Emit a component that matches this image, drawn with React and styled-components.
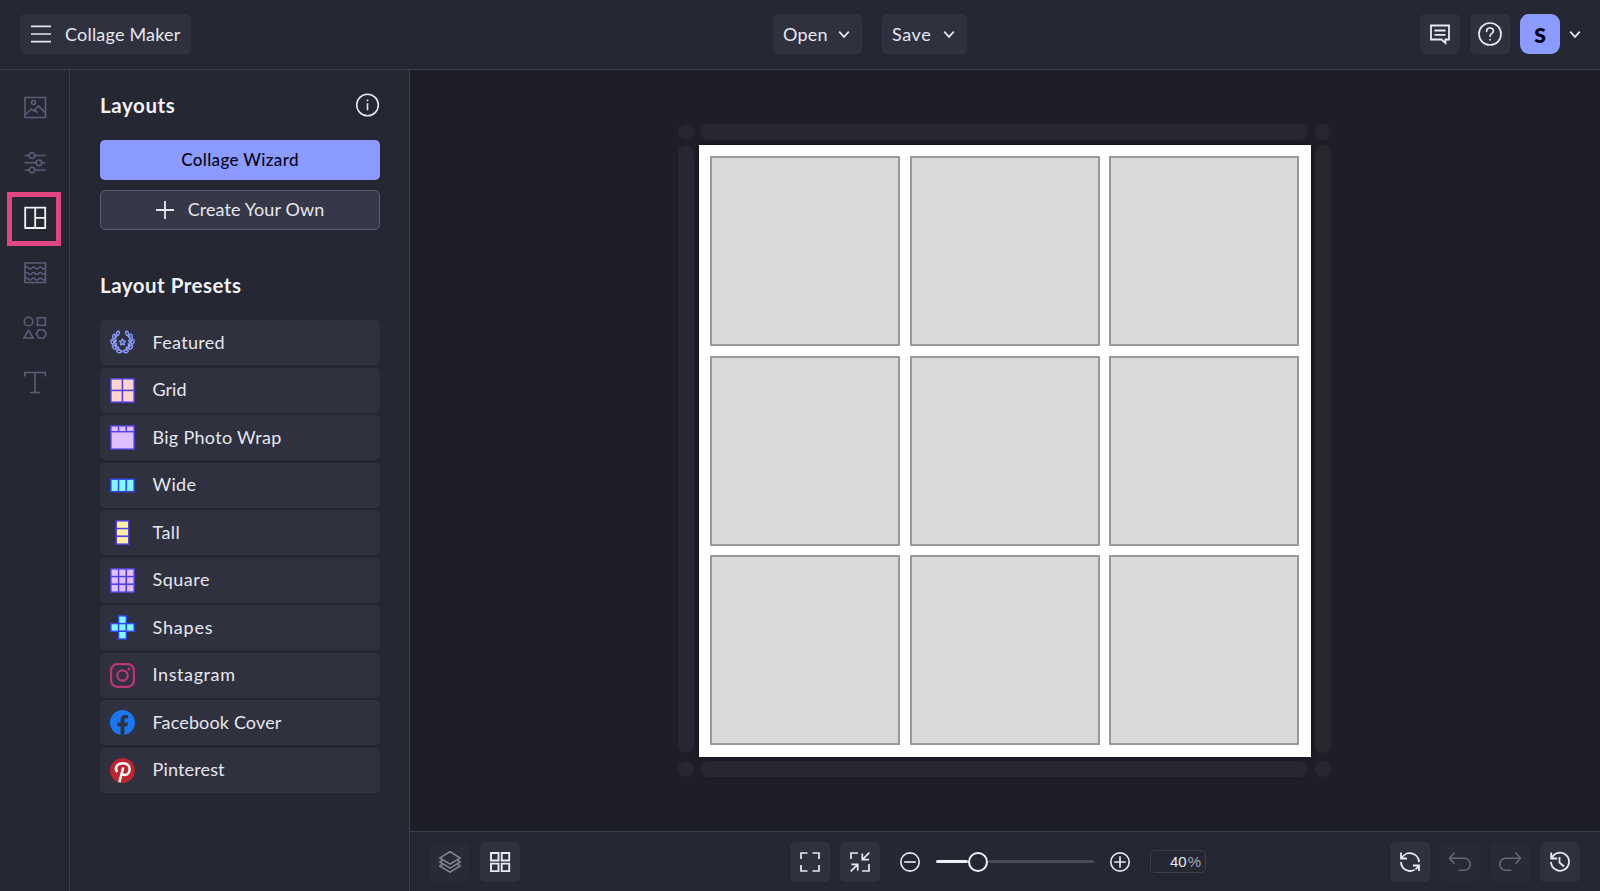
import React, { useState } from 'react';
import styled, { createGlobalStyle, css } from 'styled-components';

const GlobalStyle = createGlobalStyle`
* {
  box-sizing: border-box;
}

body {
  margin: 0;
  overflow: hidden;
  background-color: #1e1e27;
  font-family: Lato, 'Open Sans', sans-serif;
  color: #e6e7ef;
}

button {
  font-family: inherit;
  color: inherit;
  border: none;
  padding: 0;
  cursor: pointer;
}

svg {
  display: block;
  flex-shrink: 0;
}
`;

const Page = styled.div`
display: flex;
flex-direction: column;
height: 100vh;
`;

const Header = styled.header`
display: flex;
align-items: center;
height: 70px;
padding: 0 19px 1px 20px;
background-color: #252732;
border-bottom: 1px solid #3c3e4b;
`;

const HeaderButton = styled.button`
display: flex;
align-items: center;
justify-content: space-between;
width: ${props => props.$width}px;
height: 40px;
padding: 0 ${props => props.$right || 12}px 0 ${props => props.$left || 10}px;
border-radius: 5px;
background-color: #2f313e;
font-size: 18px;
letter-spacing: ${props => props.$spacing || 0}px;
`;

const FileActions = styled.div`
display: flex;
gap: 20px;
margin-left: 582.5px;
`;

const UserActions = styled.div`
display: flex;
align-items: center;
gap: 10px;
margin-left: auto;
`;

const IconButton = styled.button`
display: flex;
align-items: center;
justify-content: center;
width: 40px;
height: 40px;
border-radius: 5px;
background-color: ${props => (props.disabled ? '#282a35' : '#2f313e')};
color: ${props => (props.disabled ? props.$dim || '#656774' : '#e9eaf2')};
`;

const Avatar = styled.div`
width: 40px;
height: 40px;
margin-right: -1px;
border-radius: 9px;
background-color: #8b9bff;
color: #05051a;
font-size: 21px;
font-weight: 800;
line-height: 41px;
text-align: center;
`;

const Body = styled.div`
display: flex;
flex: 1;
min-height: 0;
`;

const Rail = styled.nav`
display: flex;
flex-direction: column;
gap: 1px;
width: 70px;
padding: 12px 0 0 7px;
background-color: #252732;
border-right: 1px solid #3c3e4b;
`;

const RailButton = styled.button`
display: flex;
align-items: center;
justify-content: center;
width: 54px;
height: 54px;
padding: 0 0 3px 1px;
background: none;
color: #5b5d79;

${props => props.$active && css`
  color: #f4f4f8;
  border: 5px solid #e2457f;
`}
`;

const Panel = styled.aside`
width: 340px;
padding: 20px 29px 0 30px;
background-color: #252732;
border-right: 1px solid #3c3e4b;
`;

const PanelHeading = styled.div`
display: flex;
align-items: center;
justify-content: space-between;
height: 30px;
margin-bottom: 20px;
`;

const Title = styled.h2`
margin: 0;
font-size: 20.5px;
font-weight: 700;
line-height: 30px;
letter-spacing: ${props => props.$spacing}px;
color: #f1f2f8;
`;

const WizardButton = styled.button`
display: block;
width: 100%;
height: 40px;
padding-bottom: 2px;
border-radius: 5px;
background-color: #8b9bff;
color: #05051a;
font-size: 17px;
font-weight: 500;
letter-spacing: 0.35px;
`;

const CreateButton = styled.button`
display: flex;
align-items: center;
justify-content: center;
gap: 14px;
width: 100%;
height: 40px;
margin: 10px 0 40px;
padding: 0 0 1px;
border-radius: 5px;
background-color: #363847;
font-size: 18px;
letter-spacing: 0.1px;

&& {
  border: 1px solid #5b5d78;
}

span {
  padding-bottom: 1px;
}
`;

const PresetList = styled.div`
display: flex;
flex-direction: column;
gap: 2.5px;
margin-top: 20px;
`;

const PresetButton = styled.button`
display: flex;
align-items: center;
gap: 17.5px;
height: 45px;
padding: 0 10px;
border-radius: 5px;
background-color: #2f313e;
font-size: 18px;
letter-spacing: ${props => props.$spacing}px;

span {
  padding-bottom: 2px;
}
`;

const Main = styled.main`
display: flex;
flex-direction: column;
flex: 1;
`;

const Workspace = styled.div`
display: grid;
place-content: center;
grid-template: 17px 612px 16px / 17px 612px 16px;
gap: 4px;
flex: 1;
padding-right: 1px;
`;

const Dot = styled.div`
width: 16px;
height: 16px;
border-radius: 50%;
background-color: #262731;
`;

const EdgeBar = styled.div`
width: ${props => (props.$vertical ? '16px' : '608px')};
height: ${props => (props.$vertical ? '608px' : '16px')};
margin-left: ${props => (props.$vertical ? 0 : 1)}px;
border-radius: 8px;
background-color: #262731;
`;

const Collage = styled.div`
display: grid;
grid-template: repeat(3, 190px) / repeat(3, 190px);
gap: 9.6px 9.7px;
padding: 11px;
background-color: #fff;
box-shadow: 0 0 5px rgba(0, 0, 0, 0.5);
`;

const Cell = styled.div`
background-color: #d9d9d9;
border: 2px solid #999;
`;

const Footer = styled.footer`
display: flex;
align-items: center;
gap: 10px;
height: 60px;
padding: 1px 20px 0;
background-color: #252732;
border-top: 1px solid #3c3e4b;
`;

const ZoomTools = styled.div`
display: flex;
align-items: center;
gap: 10px;
margin-left: 260px;
`;

const RoundButton = styled.button`
width: 20px;
height: 20px;
margin: 0 0 1px ${props => props.$before}px;
background: none;
`;

const Slider = styled.div`
display: flex;
align-items: center;
width: 158px;
height: 20px;
margin: 0 0 1px 6px;
`;

const Track = styled.div`
height: 3px;
border-radius: 2px;
background-color: ${props => (props.$filled ? '#f1f2f8' : '#494b5d')};
flex: ${props => (props.$filled ? 'none' : 1)};
`;

const Knob = styled.div`
width: 20px;
height: 20px;
border: 2px solid #f1f2f8;
border-radius: 50%;
`;

const ZoomField = styled.div`
display: flex;
align-items: center;
justify-content: flex-end;
gap: 1px;
width: 56px;
height: 23px;
margin: 0 0 1px 10px;
padding: 0 4px 1px 0;
border: 1px solid #3c3e4c;
border-radius: 5px;
font-family: 'Liberation Sans', sans-serif;
font-size: 15px;

span {
  color: #a3a5bd;
}
`;

const HistoryTools = styled.div`
display: flex;
gap: 10px;
margin-left: auto;
`;

const Icon = ({ size = 24, w = 1.5, round, children }) => (
  <svg
    width={size}
    height={size}
    viewBox="0 0 24 24"
    fill="none"
    stroke="currentColor"
    strokeWidth={w}
    strokeLinecap={round ? 'round' : 'butt'}
    strokeLinejoin={round ? 'round' : 'miter'}
  >
    {children}
  </svg>
);

const Chevron = () => (
  <svg width="12" height="12" viewBox="0 0 12 12" fill="none" stroke="currentColor" strokeWidth="1.7">
    <path d="M1.2 3.6 6 8.9l4.8-5.3" />
  </svg>
);

const railIcons = [
  {
    id: 'Image Manager',
    icon: (
      <>
        <path d="M2 1.5h20.5v20H2zM2.5 18.5l6-5.5 3 2.6M10.5 15l5-5 6.500 6.500M11.500 14l3 2.700" />
        <circle cx="10.5" cy="6.5" r="2" />
      </>
    ),
  },
  {
    id: 'Customize',
    icon: (
      <>
        <path d="M1.5 4.5h4.500M12 4.500h10.500M1.500 11.800h11.500M19 11.800h3.500M1.500 19h4.500M12 19h10.500" />
        <circle cx="9" cy="4.5" r="2.8" />
        <circle cx="16" cy="11.8" r="2.8" />
        <circle cx="9" cy="19" r="2.8" />
      </>
    ),
  },
  { id: 'Layouts', icon: <path d="M2.2 1.7h20v20.300h-20zM12.200 1.700v20.300M12.200 11.800h10" /> },
  {
    id: 'Patterns',
    icon: (
      <>
        <path d="M2 2h20.500v19.500H2z" />
        <path d="M2 7q1.700-2 3.400 0t3.400 0 3.400 0 3.400 0 3.400 0 3.400 0M2 12.500q1.700-2 3.400 0t3.400 0 3.400 0 3.400 0 3.400 0 3.400 0M2 18q1.700-2 3.400 0t3.400 0 3.400 0 3.400 0 3.400 0 3.400 0" />
      </>
    ),
  },
  {
    id: 'Graphics',
    icon: (
      <>
        <circle cx="5.5" cy="5.5" r="4.3" />
        <path d="M14.500 1.700h7.800v7.500h-7.800zM5.500 14.300 10.200 22H.8zM15.700 13.800h5.200l2.400 4.100-2.400 4.100h-5.200l-2.400-4.100z" />
      </>
    ),
  },
  { id: 'Text', icon: <path d="M1.800 5.500V1.500h20.500V5.500M12 1.500v20M7 21.500h10" /> },
];

// each preset icon is a set of [x, y, w, h] tiles on a 25px square
const Tiles = ({ fill, stroke, tiles }) => (
  <svg width="25" height="25" viewBox="0 0 25 25" fill={fill} stroke={stroke} strokeWidth="1.4">
    {tiles.map(([x, y, w, h]) => (
      <rect key={`${x}-${y}`} x={x} y={y} width={w} height={h} />
    ))}
  </svg>
);

const thirds = [0.9, 8.6, 16.4];

// x, y and rotation of the leaves on one half of the wreath
const leaves = [
  [7.9, 3.3, 15],
  [4, 6.4, 4],
  [2.3, 11.8, -18],
  [4.3, 17.3, -42],
  [9, 21.3, -75],
];

const Laurel = () => (
  <svg width="25" height="25" viewBox="0 0 25 25" fill="none" stroke="#8b9bff" strokeWidth="1.4" strokeLinejoin="round">
    {['', 'translate(25 0) scale(-1 1)'].map(transform => (
      <g key={transform} transform={transform}>
        {leaves.map(([x, y, r]) => (
          <ellipse key={y} cx={x} cy={y} rx="1.3" ry="2.3" transform={`rotate(${r} ${x} ${y})`} />
        ))}
        <path d="M6.900 5.800C4.500 9 4.100 13 6.200 16.400c1.400 2.300 3.500 4 6.300 5.300M5 12.800l1.700-2.800M6.300 16.500l.3-3.200M9 19.400l-.8-3" />
      </g>
    ))}
    <path d="m12.500 9 .9 1.900 2.100.3-1.500 1.500.3 2.100-1.800-1-1.800 1 .3-2.100-1.500-1.500 2.100-.3z" />
  </svg>
);

const presets = [
  { name: 'Featured', spacing: 0.3, icon: <Laurel /> },
  {
    name: 'Grid',
    spacing: 0,
    icon: <Tiles fill="#ffd3ce" stroke="#5442e0" tiles={[[0.9, 0.9, 11.6, 11.6], [12.5, 0.9, 11.6, 11.6], [0.9, 12.5, 11.6, 11.6], [12.5, 12.5, 11.6, 11.6]]} />,
  },
  {
    name: 'Big Photo Wrap',
    spacing: 0.3,
    icon: <Tiles fill="#dfbfff" stroke="#5442e0" tiles={[...thirds.map(x => [x, 0.9, 7.7, 5.8]), [0.9, 6.7, 23.2, 17.4]]} />,
  },
  {
    name: 'Wide',
    spacing: 0.3,
    icon: <Tiles fill="#80f8ff" stroke="#3348e8" tiles={thirds.map(x => [x, 6.2, 7.7, 12.4])} />,
  },
  {
    name: 'Tall',
    spacing: 0.4,
    icon: <Tiles fill="#fff0a0" stroke="#5442e0" tiles={thirds.map(y => [6.3, y, 12.4, 7.7])} />,
  },
  {
    name: 'Square',
    spacing: 0.5,
    icon: <Tiles fill="#dfbfff" stroke="#5442e0" tiles={thirds.flatMap(y => thirds.map(x => [x, y, 7.7, 7.7]))} />,
  },
  {
    name: 'Shapes',
    spacing: 0.8,
    icon: <Tiles fill="#80f8ff" stroke="#3348e8" tiles={[[8.6, 0.9, 7.7, 7.7], ...thirds.map(x => [x, 8.6, 7.7, 7.7]), [8.6, 16.3, 7.7, 7.7]]} />,
  },
  {
    name: 'Instagram',
    spacing: 0.6,
    icon: (
      <svg width="25" height="25" viewBox="0 0 25 25" fill="none" stroke="#bd3778" strokeWidth="2.2">
        <rect x="1.1" y="1.1" width="22.8" height="22.8" rx="6.2" />
        <circle cx="12.5" cy="12.5" r="5.2" />
        <circle cx="19" cy="6" r="1.4" fill="#bd3778" stroke="none" />
      </svg>
    ),
  },
  {
    name: 'Facebook Cover',
    spacing: 0.15,
    icon: (
      <svg width="25" height="25" viewBox="0 0 24 24" fill="#1877f2">
        <path d="M24 12.073c0-6.627-5.373-12-12-12s-12 5.373-12 12c0 5.990 4.388 10.954 10.125 11.854v-8.385H7.078v-3.470h3.047V9.430c0-3.007 1.792-4.669 4.533-4.669 1.312 0 2.686.235 2.686.235v2.953H15.830c-1.491 0-1.956.925-1.956 1.874v2.250h3.328l-.532 3.470h-2.796v8.385C19.612 23.027 24 18.062 24 12.073z" />
      </svg>
    ),
  },
  {
    name: 'Pinterest',
    spacing: 0.15,
    icon: (
      <svg width="25" height="25" viewBox="0 0 25 25">
        <circle cx="12.5" cy="12.5" r="12.5" fill="#bd252e" />
        <path
          d="M7.300 14C4.200 10.200 6.600 5.400 12.900 5.300c4.300 0 6.900 2.500 6.800 5.700-.1 3.800-2.300 6.200-5 6.100-1.700-.1-2.800-1.300-2.500-2.600M13.200 9.500 9.400 24.200"
          fill="none"
          stroke="#fff"
          strokeWidth="2.5"
        />
      </svg>
    ),
  },
];

const App = () => {
  const [activeTab, setActiveTab] = useState('Layouts');
  const zoom = 40;

  return (
    <Page>
      <GlobalStyle />
      <Header>
        <HeaderButton $width={170.5} $left={11} $right={10} $spacing={0.2}>
          <svg width="20" height="18" viewBox="0 0 20 18" stroke="currentColor" strokeWidth="1.7">
            <path d="M0 1.300h20M0 9h20M0 16.600h20" />
          </svg>
          Collage Maker
        </HeaderButton>
        <FileActions>
          <HeaderButton $width={89} $spacing={0.2}>
            Open
            <Chevron />
          </HeaderButton>
          <HeaderButton $width={85} $spacing={0.6}>
            Save
            <Chevron />
          </HeaderButton>
        </FileActions>
        <UserActions>
          <IconButton aria-label="Feedback">
            <Icon w={1.8}>
              <path d="M3 3.500h18v14h-3.500V21l-4-3.500H3zM6.500 8.500h11M6.500 12.800h11" />
            </Icon>
          </IconButton>
          <IconButton aria-label="Help">
            <Icon w={1.7} round>
              <circle cx="12" cy="12" r="11" />
              <path d="M8.600 9.300c0-2.100 1.400-3.300 3.400-3.300s3.400 1.300 3.400 3c0 2.400-3.300 2.500-3.300 5.200M12.100 17.500v.300" />
            </Icon>
          </IconButton>
          <Avatar>S</Avatar>
          <Chevron />
        </UserActions>
      </Header>
      <Body>
        <Rail>
          {railIcons.map(({ id, icon }) => (
            <RailButton key={id} aria-label={id} $active={id === activeTab} onClick={() => setActiveTab(id)}>
              <Icon w={id === 'Layouts' ? 1.8 : 1.6}>{icon}</Icon>
            </RailButton>
          ))}
        </Rail>
        <Panel>
          <PanelHeading>
            <Title $spacing={0.6}>Layouts</Title>
            <Icon w={1.6}>
              <circle cx="11.5" cy="12" r="10.8" />
              <path d="M11.500 10.200v7M11.500 6.500v1.800" />
            </Icon>
          </PanelHeading>
          <WizardButton>Collage Wizard</WizardButton>
          <CreateButton>
            <svg width="18" height="18" viewBox="0 0 18 18" stroke="currentColor" strokeWidth="1.8">
              <path d="M0 9h18M9 0v18" />
            </svg>
            <span>Create Your Own</span>
          </CreateButton>
          <Title $spacing={0.5}>Layout Presets</Title>
          <PresetList>
            {presets.map(({ name, icon, spacing }) => (
              <PresetButton key={name} $spacing={spacing}>
                {icon}
                <span>{name}</span>
              </PresetButton>
            ))}
          </PresetList>
        </Panel>
        <Main>
          <Workspace>
            <Dot />
            <EdgeBar />
            <Dot />
            <EdgeBar $vertical />
            <Collage>
              {Array.from({ length: 9 }, (_, i) => (
                <Cell key={i} />
              ))}
            </Collage>
            <EdgeBar $vertical />
            <Dot />
            <EdgeBar />
            <Dot />
          </Workspace>
          <Footer>
            <IconButton disabled $dim="#85878f" aria-label="Layers">
              <Icon w={1.5}>
                <path d="M12 1.700 22.200 8 12 14.200 1.800 8zM4.500 10.200 1.800 12 12 18.200 22.200 12l-2.700-1.800M4.500 14.200 1.800 16 12 22.200 22.200 16l-2.700-1.800" />
              </Icon>
            </IconButton>
            <IconButton aria-label="Grid">
              <Icon w={1.9}>
                <path d="M3 3h7.500v7.500H3zM13.700 3h7.500v7.500h-7.500zM3 13.600h7.500v7.500H3zM13.700 13.600h7.500v7.500h-7.500z" />
              </Icon>
            </IconButton>
            <ZoomTools>
              <IconButton aria-label="Fit">
                <Icon w={1.7}>
                  <path d="M3 9V3h6.500M14.500 3H21v6M21 15v6h-6.500M9.500 21H3v-6" />
                </Icon>
              </IconButton>
              <IconButton aria-label="Shrink">
                <Icon w={1.7}>
                  <path d="M3 9V3h7M21 14v7h-7M21.300 2.700l-6.800 6.800M14.300 3.500v6.200h6.700M2.700 21.300l6.800-6.800M3.300 14.300h6.400v6.400" />
                </Icon>
              </IconButton>
              <RoundButton $before={10} aria-label="Zoom out">
                <Icon size={20} w={2}>
                  <circle cx="12" cy="12" r="11" />
                  <path d="M5 12h14" />
                </Icon>
              </RoundButton>
              <Slider>
                <Track $filled style={{ width: zoom * 0.8 }} />
                <Knob />
                <Track />
              </Slider>
              <RoundButton $before={6} aria-label="Zoom in">
                <Icon size={20} w={2}>
                  <circle cx="12" cy="12" r="11" />
                  <path d="M5 12h14M12 5v14" />
                </Icon>
              </RoundButton>
              <ZoomField>
                {zoom}
                <span>%</span>
              </ZoomField>
            </ZoomTools>
            <HistoryTools>
              <IconButton aria-label="Swap">
                <Icon w={1.8}>
                  <path d="M3 12a9 9 0 0 0 13.500 7.700M3.500 8.500A9.200 9.200 0 0 1 21 12M3 2.500v6h6M21 21v-5.500h-6M20.500 16l-3 3.500" />
                </Icon>
              </IconButton>
              <IconButton disabled aria-label="Undo">
                <Icon w={1.6} round>
                  <path d="M6 3.200 1.500 8.200l4.500 5M1.800 8.200h14.500a6 6 0 0 1 0 12h-5" />
                </Icon>
              </IconButton>
              <IconButton disabled aria-label="Redo">
                <Icon w={1.6} round>
                  <path d="m18 3.200 4.500 5-4.500 5M22.200 8.200H7.700a6 6 0 0 0 0 12h5" />
                </Icon>
              </IconButton>
              <IconButton aria-label="History">
                <Icon w={1.8}>
                  <path d="M3 12a9 9 0 1 0 .8-4M3.200 2.500V8.500h6M11.500 7v5.500l4.500 4" />
                </Icon>
              </IconButton>
            </HistoryTools>
          </Footer>
        </Main>
      </Body>
    </Page>
  );
};

export default App;
